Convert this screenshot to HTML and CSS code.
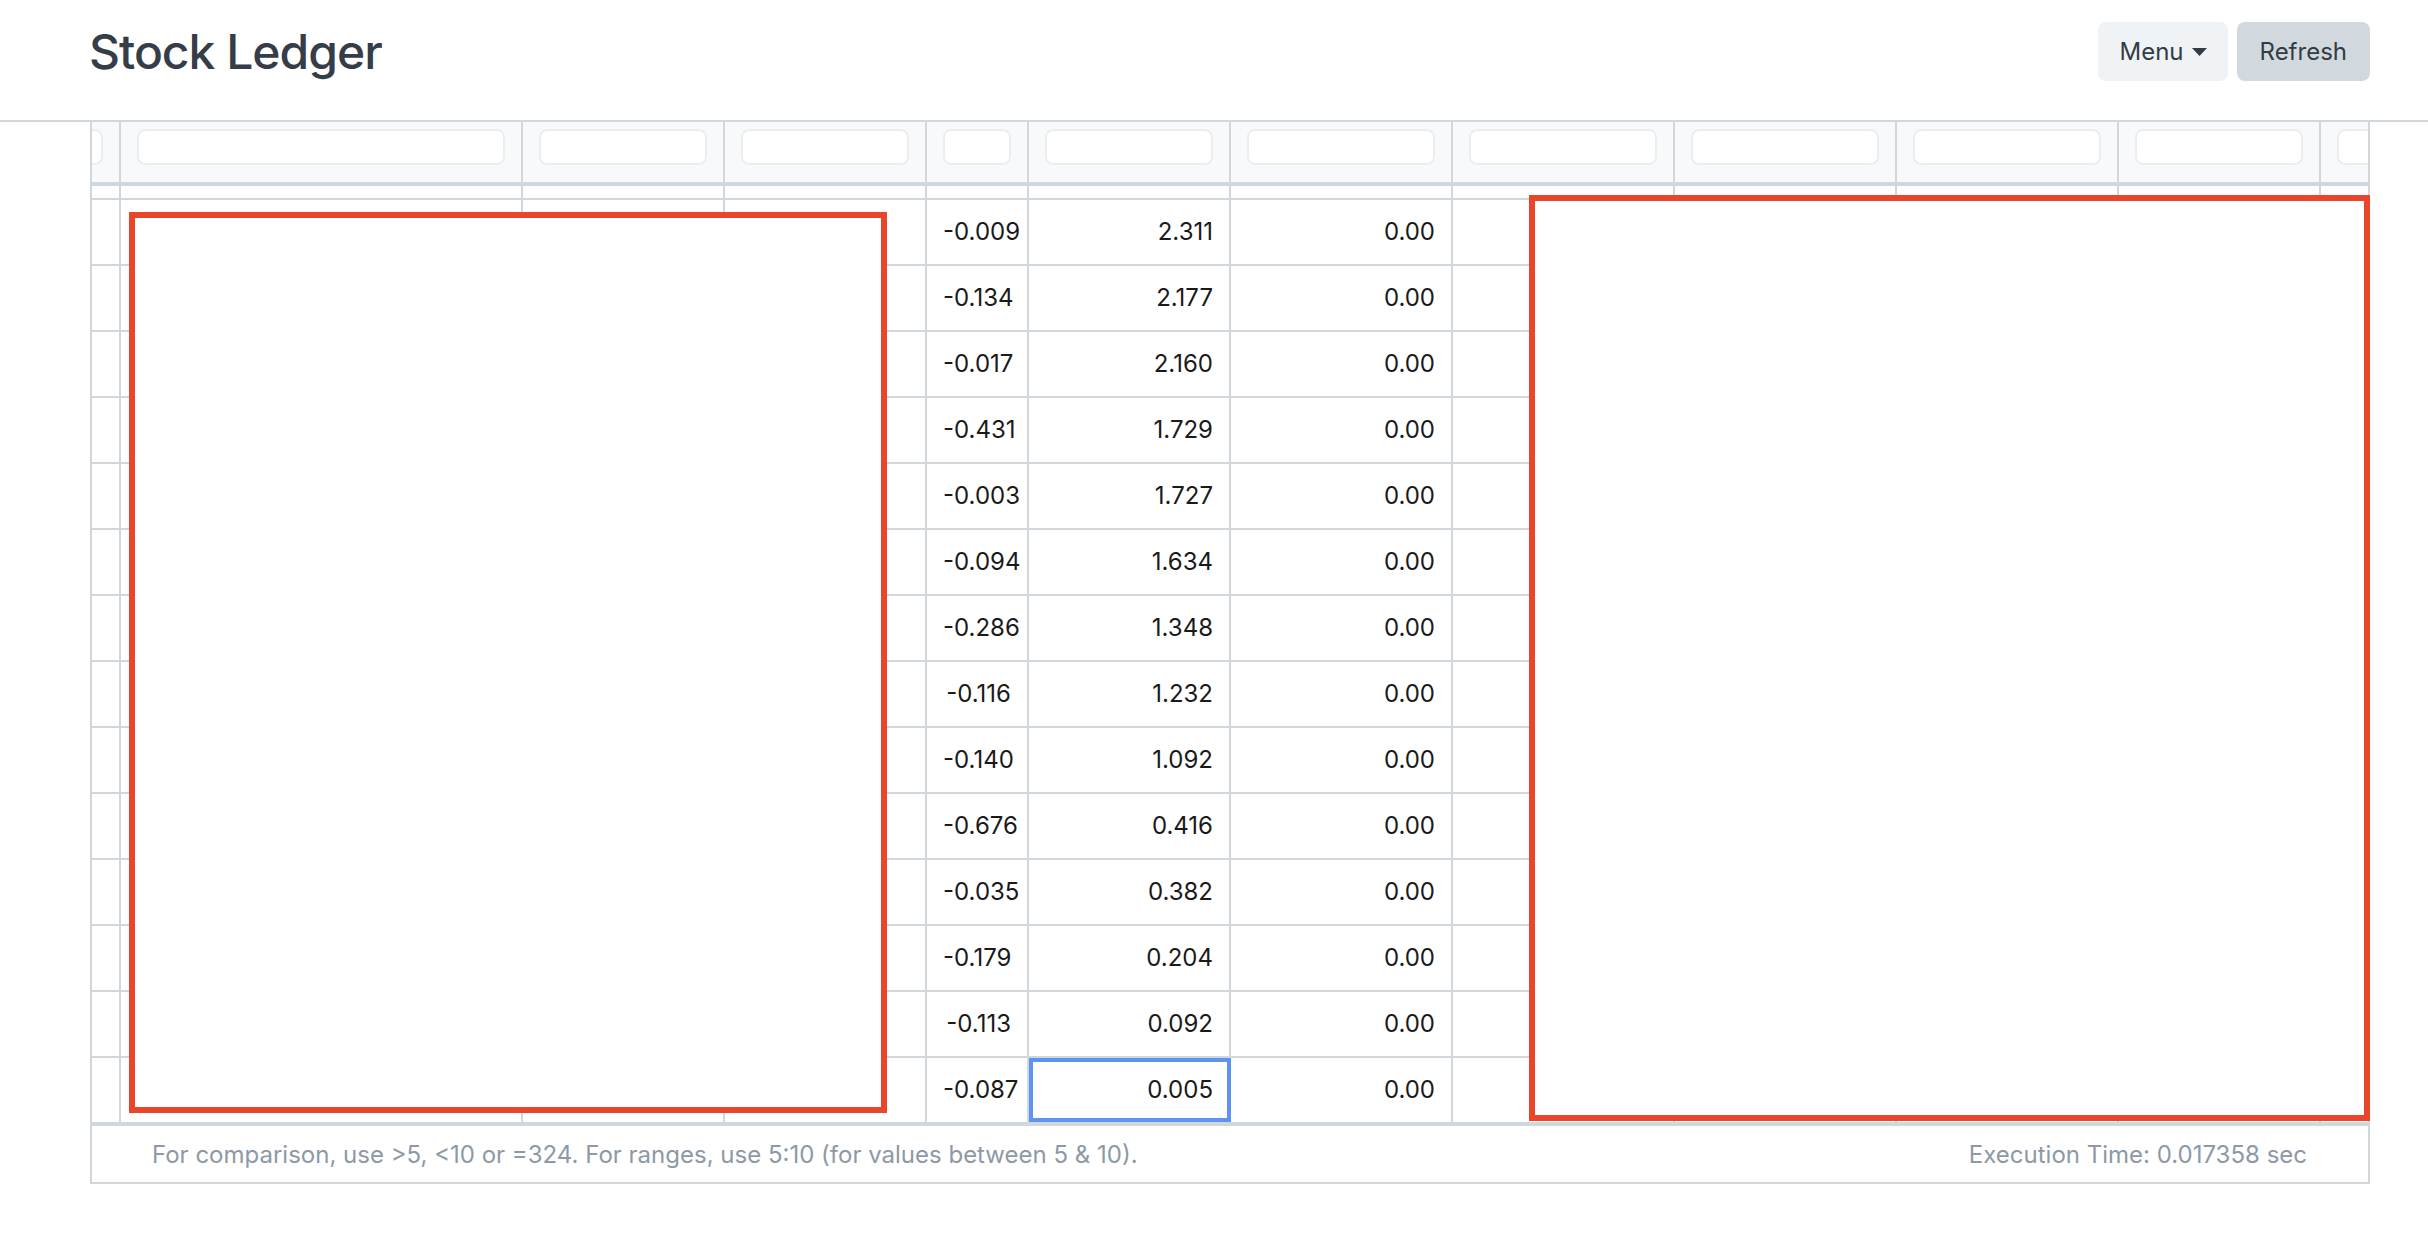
FILE: index.html
```html
<!DOCTYPE html>
<html lang="en">
<head>
	<meta charset="UTF-8">
	<title>Stock Ledger</title>
	<link rel="stylesheet" href="styles.css">
</head>
<body>
	<header class="page-head">
		<h1 class="title">Stock Ledger</h1>
		<div class="actions">
			<button class="btn btn-menu">Menu<svg class="caret" width="15" height="8" viewBox="0 0 15 8"><polygon points="0,0 15,0 7.5,8" fill="#333c44"/></svg></button>
			<button class="btn btn-refresh">Refresh</button>
		</div>
	</header>

	<div class="report">
		<div class="dt">
			<div class="dt-inner">
				<div class="dt-row dt-filter">
					<div class="cell c1"><input></div>
					<div class="cell c2"><input></div>
					<div class="cell c3"><input></div>
					<div class="cell c4"><input></div>
					<div class="cell c5"><input></div>
					<div class="cell c6"><input></div>
					<div class="cell c7"><input></div>
					<div class="cell c8"><input></div>
					<div class="cell c9"><input></div>
					<div class="cell c10"><input></div>
					<div class="cell c11"><input></div>
					<div class="cell c12"><input></div>
				</div>
				<div class="dt-body" id="rows">
					<div class="dt-row dt-partial">
						<div class="cell c1"></div><div class="cell c2"></div><div class="cell c3"></div><div class="cell c4"></div>
						<div class="cell c5"></div><div class="cell c6"></div><div class="cell c7"></div><div class="cell c8"></div>
						<div class="cell c9"></div><div class="cell c10"></div><div class="cell c11"></div><div class="cell c12"></div>
					</div>
				</div>
			</div>
		</div>
		<div class="dt-footer">
			<span>For comparison, use &gt;5, &lt;10 or =324. For ranges, use 5:10 (for values between 5 &amp; 10).</span>
			<span>Execution Time: 0.017358 sec</span>
		</div>
	</div>

	<div class="mask mask-a"></div>
	<div class="mask mask-b"></div>

	<script type="text/javascript">
	var data = [
		['-0.009','2.311'],['-0.134','2.177'],['-0.017','2.160'],['-0.431','1.729'],
		['-0.003','1.727'],['-0.094','1.634'],['-0.286','1.348'],['-0.116','1.232'],
		['-0.140','1.092'],['-0.676','0.416'],['-0.035','0.382'],['-0.179','0.204'],
		['-0.113','0.092'],['-0.087','0.005']
	];
	var body = document.getElementById('rows');
	var i, j, html;
	for(i=0;i<data.length;i++){
		html = '';
		for(j=1;j<=12;j++){
			var txt = '', cls = 'cell c'+j;
			if(j==5) txt = data[i][0];
			if(j==6) txt = data[i][1];
			if(j==7) txt = '0.00';
			if(j==6 && i==data.length-1) cls += ' focus';
			html += '<div class="'+cls+'">'+txt+'</div>';
		}
		var row = document.createElement('div');
		row.className = 'dt-row';
		row.innerHTML = html;
		body.appendChild(row);
	}
	</script>
</body>
</html>
```

FILE: styles.css
```css
*{margin: 0;padding: 0;box-sizing: border-box;}
body { position: relative; background: #fff; font-family: Inter, "Noto Sans", sans-serif; color: #333c44; }

.page-head { height: 122px; border-bottom: 2px solid #d1d8dd; display: flex; justify-content: space-between; align-items: flex-start; padding: 22px 58px 0 89px; }
.title { font-size: 48px; line-height: 59px; font-weight: 500; color: #343d48; letter-spacing: -1px; }
.actions { display: flex; gap: 9px; }
.btn { height: 59px; border: none; border-radius: 8px; padding: 0 23px; font-family: inherit; font-size: 24px; color: #333c44; display: flex; align-items: center; gap: 8px; }
.btn-menu { background: #f0f3f6; padding: 0 21px; }
.btn-refresh { background: #d1d9df; }

.report { margin-left: 90px; width: 2280px; }
.dt { border-left: 2px solid #d1d8dd; border-right: 2px solid #d1d8dd; overflow: hidden; }
.dt-inner { margin-left: -40px; width: max-content; }
.dt-row { display: flex; border-bottom: 2px solid #d1d8dd; height: 66px; }
.dt-filter { background: #f8f9fa; height: 64px; border-bottom-width: 4px; }
.dt-partial { height: 14px; }
.dt-body { border-bottom: 2px solid #d1d8dd; }

.cell { flex-shrink: 0; border-right: 2px solid #d1d8dd; padding: 0 16px; overflow: hidden; white-space: nowrap; text-align: right; font-size: 24px; line-height: 64px; color: #1a1a1a; }
.dt-filter .cell { padding-top: 7px; line-height: normal; }
.cell input { display: block; width: 100%; height: 36px; border: 2px solid #ebeef0; border-radius: 8px; background: #fff; outline: none; }
.cell.focus { outline: 4px solid #5e94ef; outline-offset: -4px; }

.c1 { width: 69px; }
.c2 { width: 402px; }
.c3, .c4, .c6, .c11, .c12 { width: 202px; }
.c5 { width: 102px; }
.c7, .c8, .c9, .c10 { width: 222px; }

.dt-footer { display: flex; justify-content: space-between; align-items: center; height: 58px; border: 2px solid #d1d8dd; border-top: none; padding: 0 61px 0 60px; font-size: 24px; color: #8d99a6; }

.mask { position: absolute; background: #fff; border: 6px solid #e9452b; }
.mask-a { left: 129px; top: 212px; width: 758px; height: 901px; }
.mask-b { left: 1529px; top: 195px; width: 841px; height: 926px; }
```
